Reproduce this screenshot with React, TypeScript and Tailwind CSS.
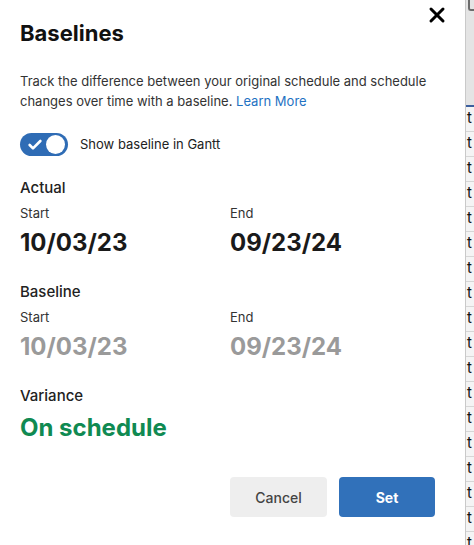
import { Check, X } from "lucide-react";

const font = { fontFamily: "Inter, 'Noto Sans', sans-serif" };

interface DateGroupProps {
  title: string;
  start: string;
  end: string;
  muted?: boolean;
}

const DateGroup = ({ title, start, end, muted }: DateGroupProps) => {
  const valueClass = muted ? "text-[#9a9a9a]" : "text-[#1a1a1a]";
  return (
    <div>
      <div className="text-[15px] leading-5 font-medium text-[#222]">{title}</div>
      <div className="mt-[7px] grid grid-cols-[210px_1fr] text-[13px] leading-4 text-[#333]">
        <span>Start</span>
        <span>End</span>
      </div>
      <div
        className={`mt-2 grid grid-cols-[210px_1fr] text-[24px] leading-7 font-bold ${valueClass}`}
      >
        <span>{start}</span>
        <span>{end}</span>
      </div>
    </div>
  );
};

const SheetStrip = () => {
  const rows = Array.from({ length: 18 });
  return (
    <div className="flex-1 border-l border-[#c9c9c9] bg-[#f4f4f4] overflow-hidden">
      <div className="h-[105px] bg-[#e4e4e4] pl-[2px]">
        <div className="h-[11px] w-6 rounded-bl-[3px] border-b-2 border-l-2 border-[#6b6b6b]" />
      </div>
      <div className="h-[2px] bg-[#3d5f9e]" />
      {rows.map((_, i) => (
        <div
          key={i}
          className="h-[25px] border-b border-[#d6d6d6] pl-[1px] text-[15px] leading-[22px] text-[#111]"
        >
          t
        </div>
      ))}
    </div>
  );
};

export default function App() {
  return (
    <div className="flex h-[545px] w-[474px] overflow-hidden bg-white" style={font}>
      <div className="w-[465px] shrink-0 bg-white pl-5 pr-[30px] shadow-[2px_0_4px_rgba(0,0,0,0.08)]">
        <div className="flex items-start justify-between pt-[3px]">
          <h2 className="mt-[16px] text-[22px] leading-7 font-bold text-[#111]">Baselines</h2>
          <button className="mr-[-14px] text-black">
            <X size={24} strokeWidth={3} />
          </button>
        </div>

        <p className="mt-[24px] text-[13px] leading-5 text-[#333]">
          Track the difference between your original schedule and schedule changes over time
          with a baseline. <span className="text-[#1f72c3]">Learn More</span>
        </p>

        <div className="mt-[22px] flex items-center gap-3">
          <div className="flex h-[23px] w-[48px] items-center justify-between rounded-full bg-[#2f6cb5] pl-[7px] pr-[3px]">
            <Check size={16} strokeWidth={4} className="text-white" />
            <div className="h-[19px] w-[19px] rounded-full bg-white" />
          </div>
          <span className="text-[13px] text-[#222]">Show baseline in Gantt</span>
        </div>

        <div className="mt-[22px]">
          <DateGroup title="Actual" start="10/03/23" end="09/23/24" />
        </div>
        <div className="mt-[25px]">
          <DateGroup title="Baseline" start="10/03/23" end="09/23/24" muted />
        </div>

        <div className="mt-[25px]">
          <div className="text-[15px] leading-5 font-medium text-[#222]">Variance</div>
          <div className="mt-[6px] text-[24px] leading-8 font-bold text-[#108a52]">
            On schedule
          </div>
        </div>

        <div className="mt-[33px] flex justify-end gap-3">
          <button className="h-10 w-[97px] rounded bg-[#eeeeee] text-[14px] font-medium text-[#444]">
            Cancel
          </button>
          <button className="h-10 w-[96px] rounded bg-[#3171ba] text-[14px] font-bold text-white">
            Set
          </button>
        </div>
      </div>
      <SheetStrip />
    </div>
  );
}
